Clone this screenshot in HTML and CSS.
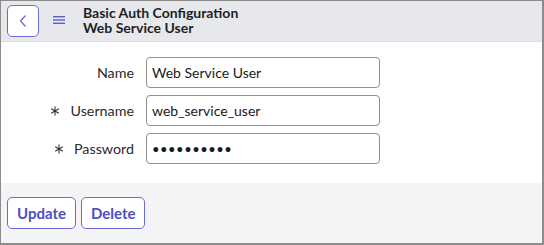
FILE: index.html
```html
<!DOCTYPE html>
<html>
<head>
<meta charset="utf-8">
<link rel="stylesheet" href="styles.css">
</head>
<body>
<div class="frame">
  <header class="header">
    <button class="back" type="button" aria-label="Back">
      <svg width="10" height="14" viewBox="0 0 10 14"><path d="M7.5 1.5 L2.5 7 L7.5 12.5" fill="none" stroke="#6466d3" stroke-width="1.2"/></svg>
    </button>
    <svg class="menu" width="12" height="9" viewBox="0 0 12 9"><rect x="0" y="0" width="12" height="1.4" fill="#5b5fc0"/><rect x="0" y="3.3" width="12" height="1.4" fill="#5b5fc0"/><rect x="0" y="6.6" width="12" height="1.4" fill="#5b5fc0"/></svg>
    <div class="title">
      <div class="title-line">Basic Auth Configuration</div>
      <div class="title-line">Web Service User</div>
    </div>
  </header>
  <main class="form">
    <div class="row">
      <label class="label">Name</label>
      <input class="field" type="text" value="Web Service User">
    </div>
    <div class="row">
      <label class="label"><svg class="req" width="10" height="10" viewBox="0 0 10 10"><path d="M5 0.6 V9.4 M1.2 2.8 L8.8 7.2 M1.2 7.2 L8.8 2.8" stroke="#333" stroke-width="1.1" fill="none"/></svg>Username</label>
      <input class="field" type="text" value="web_service_user">
    </div>
    <div class="row">
      <label class="label"><svg class="req" width="10" height="10" viewBox="0 0 10 10"><path d="M5 0.6 V9.4 M1.2 2.8 L8.8 7.2 M1.2 7.2 L8.8 2.8" stroke="#333" stroke-width="1.1" fill="none"/></svg>Password</label>
      <input class="field pw" type="password" value="abcdefghij">
    </div>
  </main>
  <footer class="footer">
    <button class="btn" type="button">Update</button>
    <button class="btn" type="button">Delete</button>
  </footer>
</div>
</body>
</html>
```
FILE: styles.css
```css
html, body {
  margin: 0;
  padding: 0;
}
body {
  width: 544px;
  height: 245px;
  font-family: Lato, "Liberation Sans", sans-serif;
  color: #1f1f1f;
  overflow: hidden;
}
.frame {
  box-sizing: border-box;
  width: 544px;
  height: 245px;
  border-style: solid;
  border-color: #8c8c8c;
  border-width: 1px 2px 2px 1px;
  display: flex;
  flex-direction: column;
  background: #fff;
}
.header {
  height: 40px;
  background: #e7e8eb;
  border-bottom: 1px solid #dcdde1;
  display: flex;
  align-items: center;
  padding: 0 0 0 6px;
  box-sizing: content-box;
}
.back {
  width: 32px;
  height: 32px;
  box-sizing: border-box;
  border: 1px solid #6a6cd6;
  border-radius: 5px;
  background: #fff;
  padding: 0;
  display: flex;
  align-items: center;
  justify-content: center;
  margin-top: -1px;
}
.menu {
  margin-left: 14px;
  margin-top: -2px;
}
.title {
  margin-left: 18px;
  font-size: 14px;
  font-weight: 700;
  color: #1d1f24;
  margin-top: -2px;
  display: flex;
  flex-direction: column;
}
.title-line {
  line-height: 15.5px;
}
.form {
  flex: 1;
  padding-top: 15px;
  display: flex;
  flex-direction: column;
  gap: 7px;
}
.row {
  display: flex;
  align-items: center;
  gap: 12px;
}
.label {
  width: 133px;
  text-align: right;
  font-size: 14.3px;
  color: #2b2b2b;
  display: flex;
  justify-content: flex-end;
  align-items: center;
}
.req {
  margin-right: 10px;
}
.field {
  box-sizing: border-box;
  width: 234px;
  height: 31px;
  border: 1px solid #8f8f8f;
  border-radius: 4px;
  padding: 0 5px;
  font-family: Lato, "Liberation Sans", sans-serif;
  font-size: 14px;
  color: #1a1a1a;
  background: #fff;
  outline: none;
}
.pw {
  font-size: 13px;
  letter-spacing: 0.5px;
}
.footer {
  height: 60px;
  background: #f4f4f6;
  display: flex;
  align-items: flex-start;
  padding: 14px 0 0 6px;
  box-sizing: border-box;
  gap: 5px;
}
.btn {
  height: 32px;
  box-sizing: border-box;
  border: 1px solid #6a6cd6;
  border-radius: 5px;
  background: #fff;
  color: #4d50bf;
  font-family: Lato, "Liberation Sans", sans-serif;
  font-size: 15px;
  font-weight: 700;
  padding: 0 9px;
}
```
